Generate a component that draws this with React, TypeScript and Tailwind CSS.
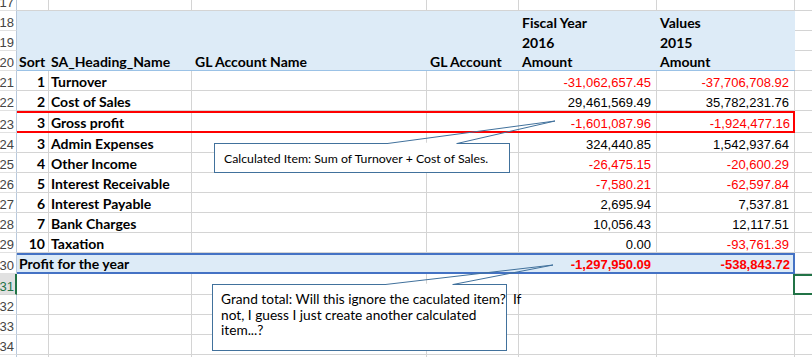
const TEXT = "font-['Lato',sans-serif] text-[14px] leading-[17px]";
const NUM = "font-['Liberation_Sans',Arial,sans-serif] text-[13px] leading-[15px]";
const GRID = "border-[#d4d4d4]";

type Line = { n: number; sort: string; name: string; e: string; f: string };

const lines: Line[] = [
  { n: 21, sort: "1", name: "Turnover", e: "-31,062,657.45", f: "-37,706,708.92" },
  { n: 22, sort: "2", name: "Cost of Sales", e: "29,461,569.49", f: "35,782,231.76" },
  { n: 23, sort: "3", name: "Gross profit", e: "-1,601,087.96", f: "-1,924,477.16" },
  { n: 24, sort: "3", name: "Admin Expenses", e: "324,440.85", f: "1,542,937.64" },
  { n: 25, sort: "4", name: "Other Income", e: "-26,475.15", f: "-20,600.29" },
  { n: 26, sort: "5", name: "Interest Receivable", e: "-7,580.21", f: "-62,597.84" },
  { n: 27, sort: "6", name: "Interest Payable", e: "2,695.94", f: "7,537.81" },
  { n: 28, sort: "7", name: "Bank Charges", e: "10,056.43", f: "12,117.51" },
  { n: 29, sort: "10", name: "Taxation", e: "0.00", f: "-93,761.39" },
];

const tone = (v: string) => (v.startsWith("-") ? "text-[#ff0000]" : "text-black");

function RowNum({ n, active = false }: { n: number; active?: boolean }) {
  if (active) {
    return (
      <div className={`w-[17px] shrink-0 flex items-end justify-end overflow-hidden pr-[1px] bg-[#e1e1e1] border-r-2 border-r-[#217346] border-b border-b-[#d4d4d4] text-[#217346] ${NUM}`}>
        {n}
      </div>
    );
  }
  return (
    <div className={`w-[17px] shrink-0 flex items-end justify-end overflow-hidden pr-[2px] border-r border-r-[#b9c9dc] border-b border-b-[#e1e1e1] text-[#444] ${NUM}`}>
      {n}
    </div>
  );
}

function Row({ n, h, active = false, children }: { n: number; h: string; active?: boolean; children: React.ReactNode }) {
  return (
    <div className={`flex ${h}`}>
      <RowNum n={n} active={active} />
      {children}
      <div className={`relative flex-1 border-b ${GRID}`}>
        {active && <span className="absolute -left-[2px] top-0 -bottom-[1px] -right-[4px] border-2 border-[#217346]" />}
      </div>
    </div>
  );
}

function EmptyCells() {
  return (
    <>
      <div className={`w-[32px] shrink-0 border-r border-b ${GRID}`} />
      <div className={`w-[143px] shrink-0 border-r border-b ${GRID}`} />
      <div className={`w-[235px] shrink-0 border-r border-b ${GRID}`} />
      <div className={`w-[92px] shrink-0 border-r border-b ${GRID}`} />
      <div className={`w-[138px] shrink-0 border-r border-b ${GRID}`} />
      <div className={`w-[138px] shrink-0 border-r border-b ${GRID}`} />
    </>
  );
}

function DataCells({ r }: { r: Line }) {
  return (
    <>
      <div className={`w-[32px] shrink-0 border-r border-b ${GRID} flex items-end justify-end pr-[3px] font-bold ${TEXT}`}>{r.sort}</div>
      <div className={`w-[143px] shrink-0 border-r border-b ${GRID} flex items-end pl-[2px] font-bold whitespace-nowrap ${TEXT}`}>{r.name}</div>
      <div className={`w-[235px] shrink-0 border-r border-b ${GRID}`} />
      <div className={`w-[92px] shrink-0 border-r border-b ${GRID}`} />
      <div className={`w-[138px] shrink-0 border-r border-b ${GRID} flex items-end justify-end pr-[5px] ${tone(r.e)} ${NUM}`}>{r.e}</div>
      <div className={`w-[138px] shrink-0 border-r border-b ${GRID} flex items-end justify-end pr-[5px] ${tone(r.f)} ${NUM}`}>{r.f}</div>
    </>
  );
}

function GrossRow({ r }: { r: Line }) {
  // red frame drawn round the calculated item
  return (
    <div className="flex w-[778px] shrink-0 border-y-2 border-r-2 border-[#ff0000]">
      <div className={`w-[32px] shrink-0 border-r ${GRID} flex items-end justify-end pr-[3px] font-bold ${TEXT}`}>{r.sort}</div>
      <div className={`w-[143px] shrink-0 border-r ${GRID} flex items-end pl-[2px] font-bold ${TEXT}`}>{r.name}</div>
      <div className={`w-[235px] shrink-0 border-r ${GRID}`} />
      <div className={`w-[92px] shrink-0 border-r ${GRID}`} />
      <div className={`w-[138px] shrink-0 border-r ${GRID} flex items-end justify-end pr-[5px] ${tone(r.e)} ${NUM}`}>{r.e}</div>
      <div className={`w-[136px] shrink-0 flex items-end justify-end pr-[3px] ${tone(r.f)} ${NUM}`}>{r.f}</div>
    </div>
  );
}

export default function App() {
  return (
    <div className="relative w-[812px] h-[357px] overflow-hidden bg-white">
      <div className="-mt-[9px]">
        <Row n={17} h="h-[20px]">
          <EmptyCells />
        </Row>

        {/* pivot header */}
        <Row n={18} h="h-[20px]">
          <div className={`flex w-[778px] shrink-0 bg-[#ddebf7] font-bold ${TEXT}`}>
            <div className="w-[502px] shrink-0" />
            <div className="w-[138px] shrink-0 flex items-end pl-[3px]">Fiscal Year</div>
            <div className="w-[138px] shrink-0 flex items-end pl-[3px]">Values</div>
          </div>
        </Row>
        <Row n={19} h="h-[20px]">
          <div className={`flex w-[778px] shrink-0 bg-[#ddebf7] font-bold ${TEXT}`}>
            <div className="w-[502px] shrink-0" />
            <div className="w-[138px] shrink-0 flex items-end pl-[3px]">2016</div>
            <div className="w-[138px] shrink-0 flex items-end pl-[3px]">2015</div>
          </div>
        </Row>
        <Row n={20} h="h-[20px]">
          <div className={`flex w-[778px] shrink-0 bg-[#ddebf7] border-b border-[#9bc2e6] font-bold whitespace-nowrap ${TEXT}`}>
            <div className="w-[32px] shrink-0 flex items-end pl-[2px]">Sort</div>
            <div className="w-[143px] shrink-0 flex items-end pl-[2px]">SA_Heading_Name</div>
            <div className="w-[235px] shrink-0 flex items-end pl-[3px]">GL Account Name</div>
            <div className="w-[92px] shrink-0 flex items-end pl-[3px]">GL Account</div>
            <div className="w-[138px] shrink-0 flex items-end pl-[3px]">Amount</div>
            <div className="w-[138px] shrink-0 flex items-end pl-[3px]">Amount</div>
          </div>
        </Row>

        {lines.map((r) =>
          r.n === 23 ? (
            <Row key={r.n} n={r.n} h="h-[22px]">
              <GrossRow r={r} />
            </Row>
          ) : (
            <Row key={r.n} n={r.n} h="h-[20px]">
              <DataCells r={r} />
            </Row>
          )
        )}

        {/* grand total */}
        <Row n={30} h="h-[21px]">
          <div className={`flex w-[778px] shrink-0 bg-[#ddebf7] border-y-2 border-r-2 border-[#4472c4] font-bold`}>
            <div className={`w-[502px] shrink-0 flex items-end pl-[2px] ${TEXT}`}>Profit for the year</div>
            <div className={`w-[138px] shrink-0 flex items-end justify-end pr-[6px] text-[#ff0000] ${NUM}`}>-1,297,950.09</div>
            <div className={`w-[136px] shrink-0 flex items-end justify-end pr-[3px] text-[#ff0000] ${NUM}`}>-538,843.72</div>
          </div>
        </Row>
        <Row n={31} h="h-[21px]" active>
          <EmptyCells />
        </Row>
        {[32, 33, 34, 35].map((n) => (
          <Row key={n} n={n} h="h-[20px]">
            <EmptyCells />
          </Row>
        ))}
      </div>

      {/* comment callouts */}
      <div className="absolute left-[214px] top-[143px] w-[296px] h-[30px] border border-[#41719c] bg-white flex items-center pl-[9px] whitespace-nowrap text-black font-['Lato',sans-serif] text-[12.3px] leading-[15px]">
        Calculated Item: Sum of Turnover + Cost of Sales.
      </div>
      <div className="absolute left-[212px] top-[284px] w-[295px] h-[67px] border border-[#41719c] bg-white pl-[8px] pt-[6px] whitespace-pre text-black font-['Lato',sans-serif] text-[13.7px] leading-[15.5px]">
        {"Grand total: Will this ignore the caculated item?  If\nnot, I guess I just create another calculated\nitem...?"}
      </div>
      <svg className="absolute left-0 top-0 pointer-events-none" width="812" height="357" viewBox="0 0 812 357">
        <line x1="388" y1="143.5" x2="456.5" y2="143.5" stroke="#fff" strokeWidth="1.5" />
        <line x1="387.5" y1="143.5" x2="555" y2="121" stroke="#41719c" strokeWidth="1" />
        <line x1="457" y1="143.5" x2="555" y2="121" stroke="#41719c" strokeWidth="1" />
        <line x1="386" y1="284.5" x2="452.5" y2="284.5" stroke="#fff" strokeWidth="1.5" />
        <line x1="385.5" y1="284.5" x2="553" y2="265" stroke="#41719c" strokeWidth="1" />
        <line x1="453" y1="284.5" x2="553" y2="265" stroke="#41719c" strokeWidth="1" />
      </svg>
    </div>
  );
}
